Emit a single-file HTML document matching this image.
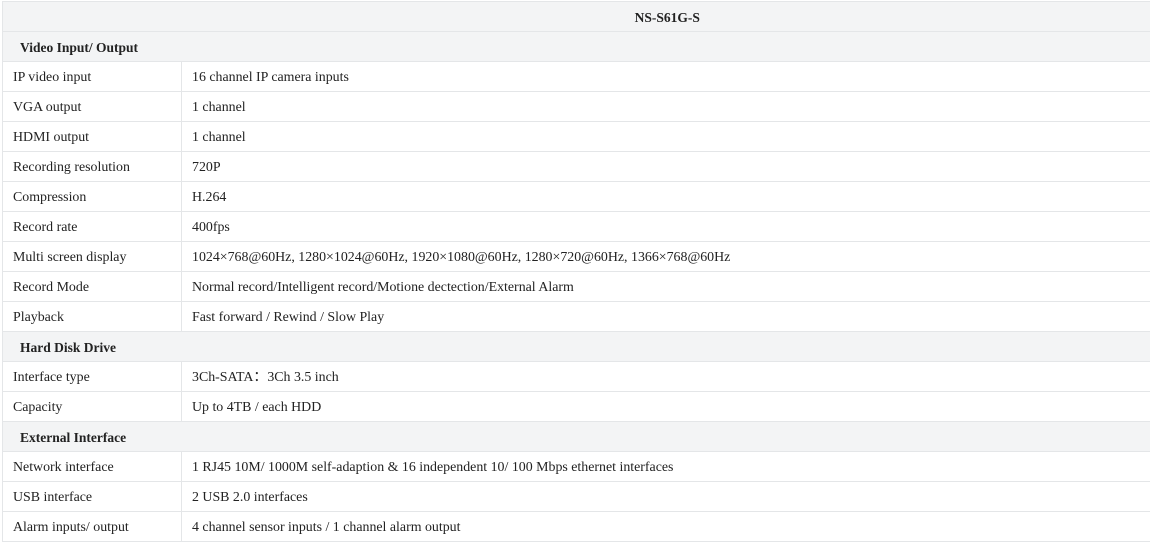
<!DOCTYPE html>
<html><head><style>
body{margin:0;background:#fff;font-family:"Liberation Serif",serif;font-size:13.9px;color:#222;}
table{position:absolute;left:2px;top:1px;width:1152px;border-collapse:collapse;}
tr{height:30px;}
td{height:29px;line-height:27px;border:1px solid #e4e6e8;padding:2px 0 0 10px;white-space:nowrap;box-sizing:border-box;overflow:hidden;}
td:first-child{width:179px;}
tr.h td{background:#f3f4f5;font-weight:bold;padding-left:17px;font-size:13.5px;}
tr.t td{background:#f3f4f5;font-weight:bold;text-align:center;padding:2px 0 0 0;font-size:13.5px;}
tr.t td:first-child{border-right:none;}
tr.t td:last-child{border-left:none;}
.c{line-height:0;}
</style></head><body>
<table>
<tr class="t"><td></td><td>NS-S61G-S</td></tr>
<tr class="h"><td colspan="2">Video Input/ Output</td></tr>
<tr><td>IP video input</td><td>16 channel IP camera inputs</td></tr>
<tr><td>VGA output</td><td>1 channel</td></tr>
<tr><td>HDMI output</td><td>1 channel</td></tr>
<tr><td>Recording resolution</td><td>720P</td></tr>
<tr><td>Compression</td><td>H.264</td></tr>
<tr><td>Record rate</td><td>400fps</td></tr>
<tr><td>Multi screen display</td><td>1024×768@60Hz, 1280×1024@60Hz, 1920×1080@60Hz, 1280×720@60Hz, 1366×768@60Hz</td></tr>
<tr><td>Record Mode</td><td>Normal record/Intelligent record/Motione dectection/External Alarm</td></tr>
<tr><td>Playback</td><td>Fast forward / Rewind / Slow Play</td></tr>
<tr class="h"><td colspan="2">Hard Disk Drive</td></tr>
<tr><td>Interface type</td><td>3Ch-SATA<span class="c">：</span>3Ch 3.5 inch</td></tr>
<tr><td>Capacity</td><td>Up to 4TB / each HDD</td></tr>
<tr class="h"><td colspan="2">External Interface</td></tr>
<tr><td>Network interface</td><td>1 RJ45 10M/ 1000M self-adaption &amp; 16 independent 10/ 100 Mbps ethernet interfaces</td></tr>
<tr><td>USB interface</td><td>2 USB 2.0 interfaces</td></tr>
<tr><td>Alarm inputs/ output</td><td>4 channel sensor inputs / 1 channel alarm output</td></tr>
</table>
</body></html>
